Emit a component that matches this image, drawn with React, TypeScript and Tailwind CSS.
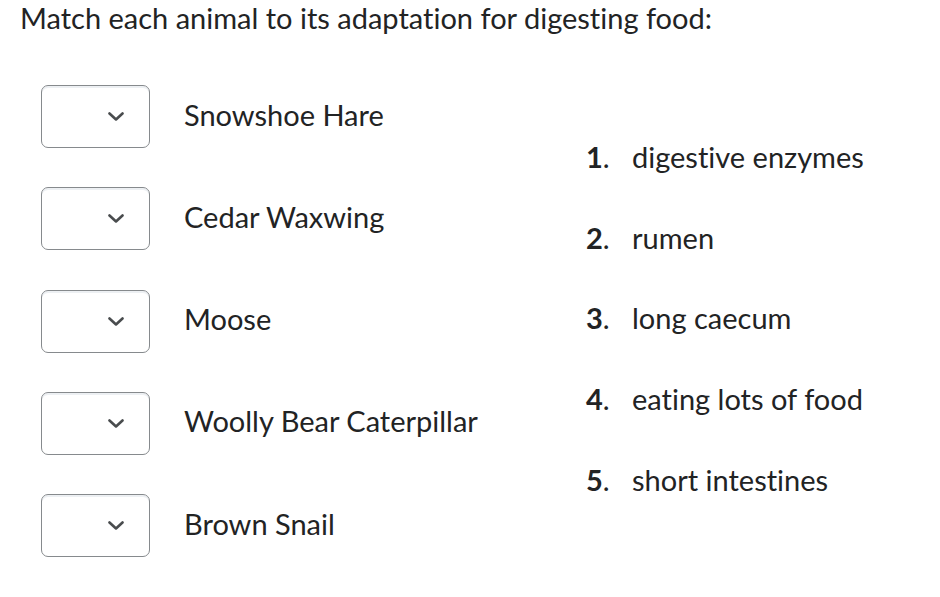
import React from 'react';

const animals = ['Snowshoe Hare', 'Cedar Waxwing', 'Moose', 'Woolly Bear Caterpillar', 'Brown Snail'];
const adaptations = ['digestive enzymes', 'rumen', 'long caecum', 'eating lots of food', 'short intestines'];

const Chevron = () => (
  <svg width="16" height="9" viewBox="0 0 16 9" fill="none" className="text-[#494c4e]">
    <path d="M1.5 1.5 8 7.5 14.5 1.5" stroke="currentColor" strokeWidth="2.6" strokeLinecap="round" strokeLinejoin="round" />
  </svg>
);

const MatchSelect = () => (
  <div className="w-[109px] h-[63px] shrink-0 rounded-[7px] border border-[#868a8d] bg-white shadow-[inset_0_2px_0_0_rgba(185,194,208,0.25)] flex items-center justify-end pr-[25px]">
    <Chevron />
  </div>
);

export default function App() {
  return (
    <div className="w-[940px] h-[597px] bg-white text-[#222324] font-['Lato','Noto_Sans',sans-serif] [font-variant-ligatures:none] pl-[20px]">
      <h1 className="text-[29px] leading-[35px] font-normal">
        Match each animal to its adaptation for digesting food:
      </h1>

      <div className="flex items-center mt-[50px]">
        {/* choices on the left */}
        <div className="flex flex-col gap-[39.3px] pl-[21px] w-[566px]">
          {animals.map((a) => (
            <div key={a} className="flex items-center gap-[34px]">
              <MatchSelect />
              <span className="text-[29px] leading-[32px] -mt-[4px]">{a}</span>
            </div>
          ))}
        </div>

        {/* numbered answers */}
        <ol className="flex flex-col -mt-[6px]">
          {adaptations.map((t, i) => (
            <li key={t} className="h-[80.75px] flex items-center text-[29px]">
              <span className="w-[46px] font-bold">{i + 1}<span className="font-normal">.</span></span>
              <span>{t}</span>
            </li>
          ))}
        </ol>
      </div>
    </div>
  );
}
